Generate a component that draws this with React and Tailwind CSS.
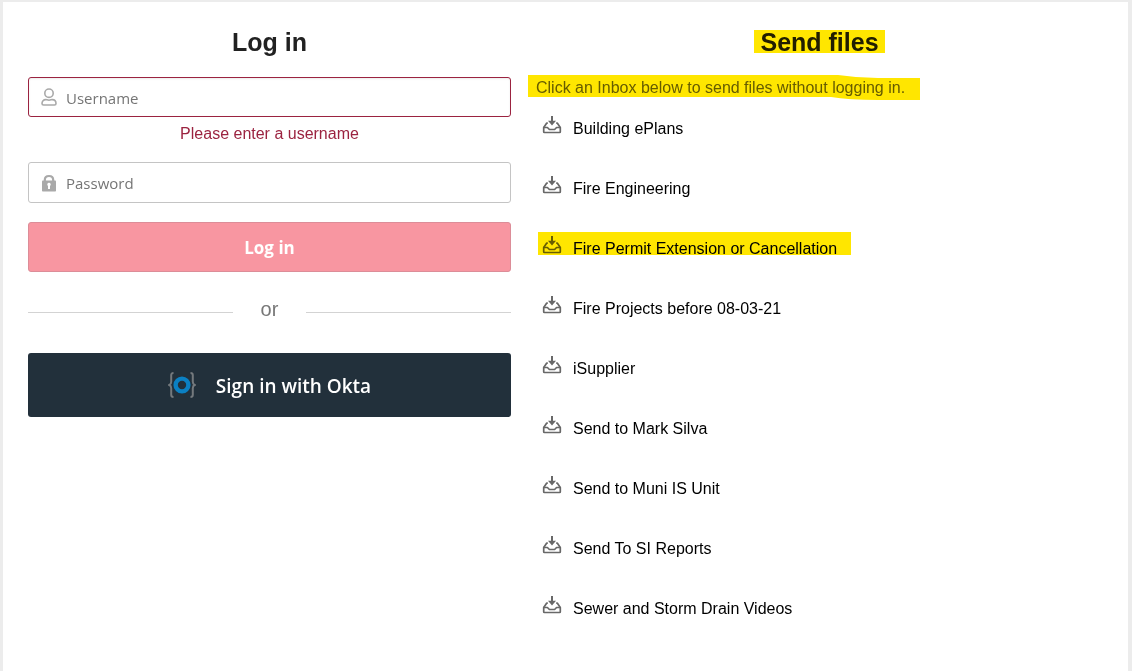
import React, { useState } from 'react';

const inboxes = [
  { name: 'Building ePlans' },
  { name: 'Fire Engineering' },
  { name: 'Fire Permit Extension or Cancellation', marked: true },
  { name: 'Fire Projects before 08-03-21' },
  { name: 'iSupplier' },
  { name: 'Send to Mark Silva' },
  { name: 'Send to Muni IS Unit' },
  { name: 'Send To SI Reports' },
  { name: 'Sewer and Storm Drain Videos' },
];

const UserIcon = () => (
  <svg viewBox="0 0 16 18" className="w-4 h-[18px] shrink-0" fill="none" stroke="#a9a9a9" strokeWidth="1.6" aria-hidden="true">
    <circle cx="8" cy="5.2" r="4.2" />
    <path d="M1 15.600c0-2.300 1.500-4 3.700-4 1 0 1.800.6 3.300.6s2.300-.6 3.300-.6c2.200 0 3.700 1.700 3.700 4 0 .9-.6 1.400-1.500 1.400h-11c-.9 0-1.500-.5-1.500-1.400z" />
  </svg>
);

const LockIcon = () => (
  <svg viewBox="0 0 16 18" className="w-4 h-[18px] shrink-0" aria-hidden="true">
    <path d="M3.800 8V6C3.800 3.600 5.500 2 8 2s4.200 1.600 4.200 4v2" fill="none" stroke="#a9a9a9" strokeWidth="2.200" />
    <rect x="1" y="6.500" width="14" height="11" rx=".8" fill="#a9a9a9" />
    <path d="M8 8.800a1.700 1.700 0 0 1 1 3.100V15H7v-3.100a1.700 1.700 0 0 1 1-3.100z" fill="#fff" />
  </svg>
);

const InboxIcon = () => (
  <svg viewBox="0 0 20 18" className="w-5 h-[18px] shrink-0" fill="none" stroke="#686868" strokeWidth="1.700" strokeLinejoin="round" aria-hidden="true">
    <path d="M10 0v7" strokeWidth="2" />
    <path d="M6 4.800h8L10 9.400z" fill="#686868" stroke="none" />
    <path d="M5.800 7.200H4.600l-2.900 4.300v4.300c0 .5.200.7.700.7h15.200c.5 0 .7-.2.700-.7v-4.300l-2.900-4.300h-1.200" />
    <path d="M1.700 11.500h3.700l2 2h5.200l2-2h3.700" />
  </svg>
);

const OktaIcon = () => (
  <svg viewBox="0 0 28 28" className="w-7 h-7 mb-0.5 shrink-0" fill="none" aria-hidden="true">
    <circle cx="14" cy="14" r="6.400" stroke="#0b80c3" strokeWidth="4.400" />
    <path d="M5.500 2C3.800 2 3.200 2.800 3.200 4.200v6.500c0 1.800-.6 2.800-1.900 3.300 1.300.5 1.900 1.500 1.900 3.300v6.500c0 1.400.6 2.200 2.300 2.200" stroke="#74797d" strokeWidth="2" />
    <path d="M22.500 2c1.700 0 2.300.8 2.300 2.200v6.500c0 1.800.6 2.800 1.900 3.300-1.300.5-1.900 1.500-1.900 3.300v6.500c0 1.400-.6 2.200-2.300 2.200" stroke="#74797d" strokeWidth="2" />
  </svg>
);

const App = () => {
  const [username, setUsername] = useState('');
  const [password, setPassword] = useState('');

  return (
    <div className="min-h-screen flex bg-[#ececec] pt-0.5 pl-[3px] pr-1 font-['Liberation_Sans',Arial,sans-serif]">
      <main className="flex-1 bg-white px-[25px] pt-6 grid grid-cols-[46fr_54fr] gap-x-[25px] items-start">
        <section>
          <h1 className="text-[25px] leading-8 font-bold text-[#212121] text-center">Log in</h1>

          <form onSubmit={(e) => e.preventDefault()}>
            <div className="mt-[19px] h-10 flex items-center gap-[9px] px-3 border border-[#9b2340] rounded-[3px] shadow-[inset_0_1px_2px_#00000014]">
              <UserIcon />
              <input
                type="text"
                aria-label="Username"
                aria-invalid="true"
                aria-describedby="username-error"
                placeholder="Username"
                value={username}
                onChange={(e) => setUsername(e.target.value)}
                className="flex-1 min-w-0 pt-0.5 outline-none text-[15px] text-gray-800 placeholder:text-[#757575] font-['Open_Sans',sans-serif]"
              />
            </div>
            <p id="username-error" className="mt-[5px] text-base leading-6 text-center text-[#9b2340]">
              Please enter a username
            </p>

            <div className="mt-4 h-[41px] flex items-center gap-[9px] px-3 border border-[#c4c4c4] rounded-[3px]">
              <LockIcon />
              <input
                type="password"
                aria-label="Password"
                placeholder="Password"
                value={password}
                onChange={(e) => setPassword(e.target.value)}
                className="flex-1 min-w-0 pt-0.5 outline-none text-[15px] text-gray-800 placeholder:text-[#757575] font-['Open_Sans',sans-serif]"
              />
            </div>

            <button
              type="submit"
              className="mt-[19px] w-full h-[50px] pt-0.5 bg-[#f896a1] border border-[#dc8d98] rounded-[3px] text-white text-[17px] font-bold font-['Open_Sans',sans-serif]"
            >
              Log in
            </button>
          </form>

          <div className="mt-6 flex items-end">
            <div className="flex-1 h-px mb-[13px] bg-[#d3d3d3]"></div>
            <span className="px-7 pb-1 text-xl leading-[26px] text-[#777]">or</span>
            <div className="flex-1 h-px mb-[13px] bg-[#d3d3d3]"></div>
          </div>

          <button
            type="button"
            className="mt-[27px] w-full h-16 pt-0.5 flex items-center justify-center gap-5 bg-[#22303b] rounded-[3px] text-white text-[19px] font-semibold font-['Open_Sans',sans-serif]"
          >
            <OktaIcon />
            Sign in with Okta
          </button>
        </section>

        <section>
          <h2 className="text-[25px] leading-8 font-bold text-[#212121] text-center">
            <span className="relative inline-block">
              Send files
              <span className="absolute -inset-x-1.5 top-1 h-[23px] bg-[#ffe600] mix-blend-multiply"></span>
            </span>
          </h2>

          <p className="mt-[18px] flex text-base leading-6 text-[#666]">
            <span className="relative">
              Click an Inbox below to send files without logging in.
              <svg
                viewBox="0 0 392 25"
                preserveAspectRatio="none"
                className="absolute -left-2 -top-px w-[calc(100%+23px)] h-[25px] mix-blend-multiply"
                aria-hidden="true"
              >
                <path d="M0 0H310Q330 3 350 3H392V25H350Q320 25 303 22H0z" fill="#ffe600" />
              </svg>
            </span>
          </p>

          <ul className="mt-4 pl-1.5 flex flex-col gap-9">
            {inboxes.map((inbox) => (
              <li key={inbox.name} className="flex">
                <a href="#" className="relative flex items-start gap-[11px] text-base leading-6 text-black">
                  <InboxIcon />
                  <span className="pt-px -mb-px">{inbox.name}</span>
                  {inbox.marked && (
                    <span className="absolute -left-1 -right-3.5 -top-1 h-[23px] bg-[#ffe600] mix-blend-multiply"></span>
                  )}
                </a>
              </li>
            ))}
          </ul>
        </section>
      </main>
    </div>
  );
};

export default App;
